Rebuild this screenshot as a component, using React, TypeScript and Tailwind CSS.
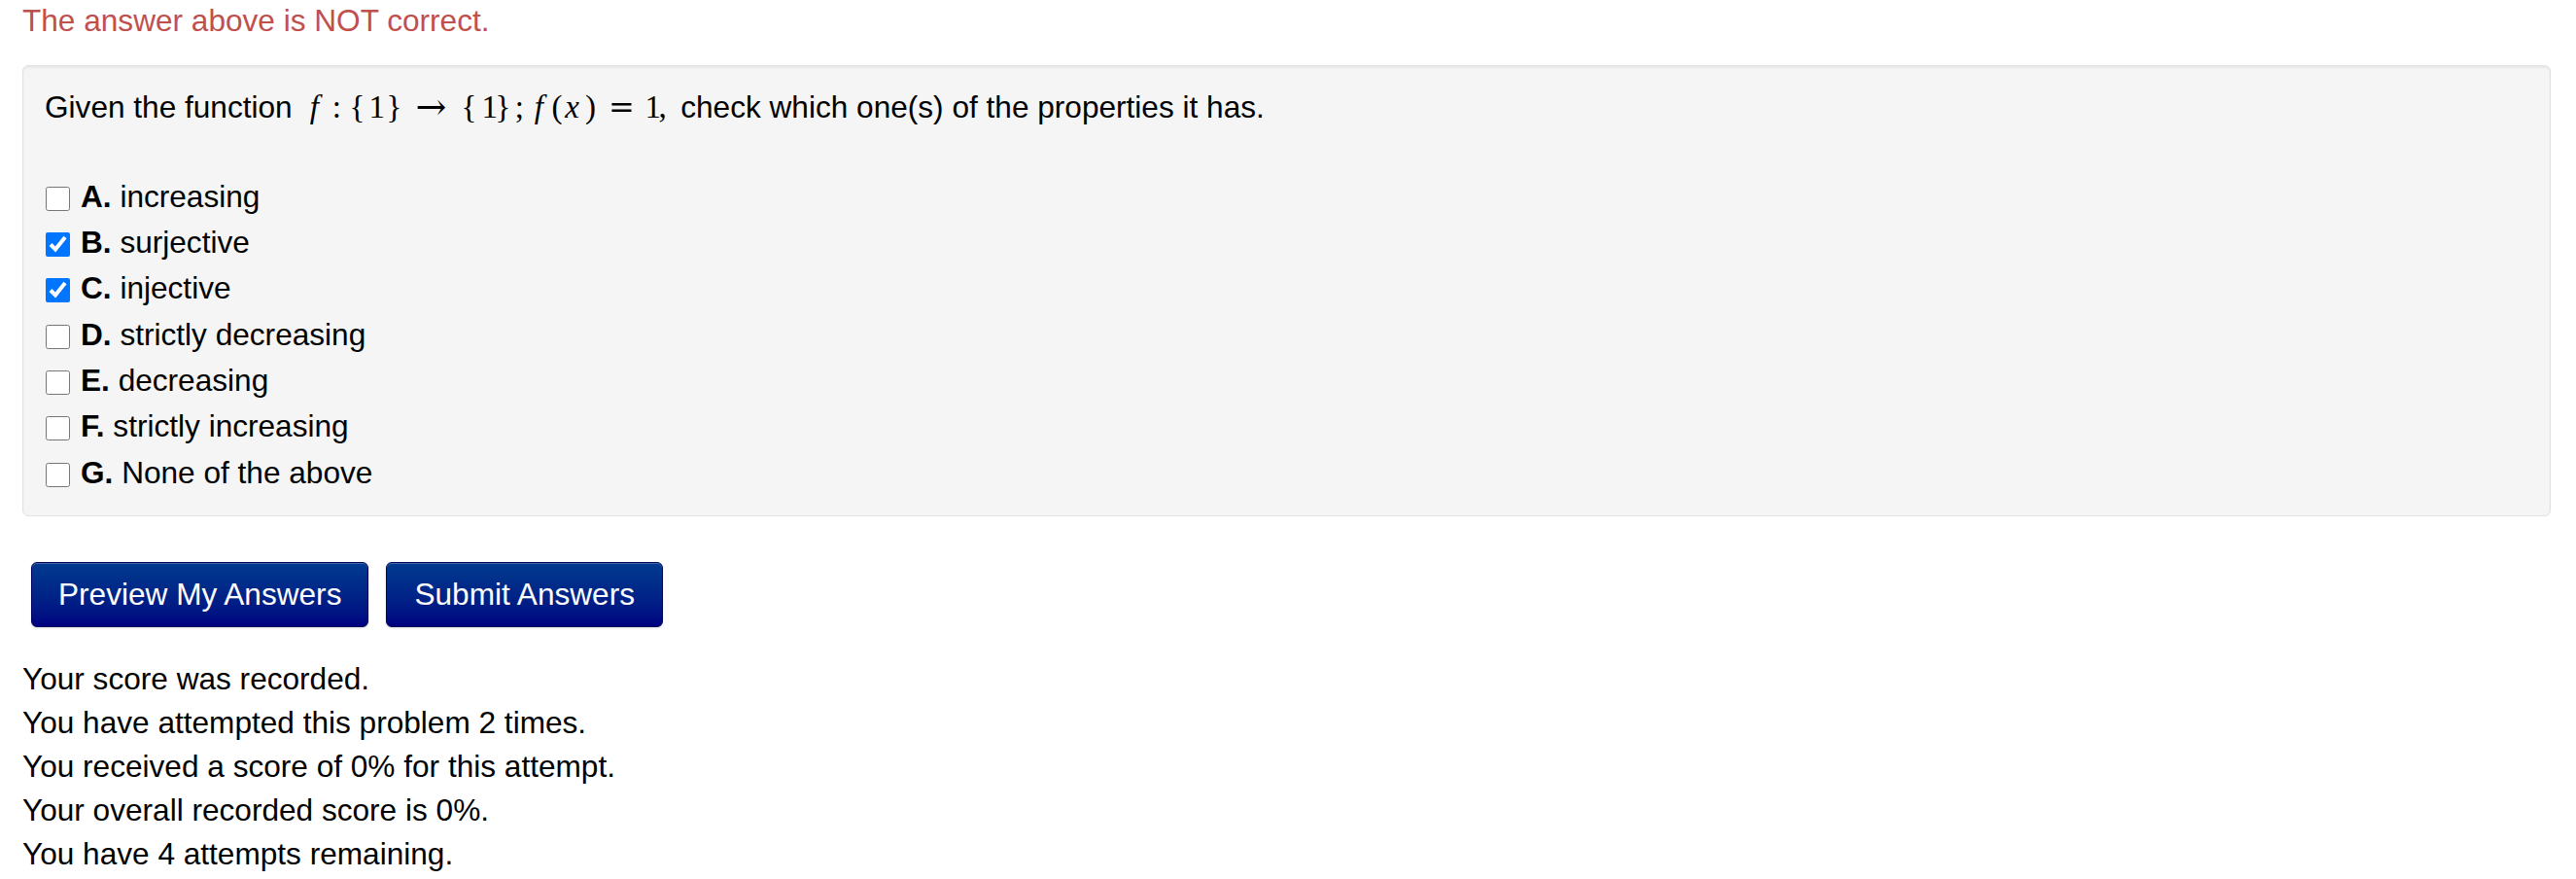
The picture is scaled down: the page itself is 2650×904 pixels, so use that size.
import React from "react";

const options = [
  { k: "A", t: "increasing", c: false },
  { k: "B", t: "surjective", c: true },
  { k: "C", t: "injective", c: true },
  { k: "D", t: "strictly decreasing", c: false },
  { k: "E", t: "decreasing", c: false },
  { k: "F", t: "strictly increasing", c: false },
  { k: "G", t: "None of the above", c: false },
];

const scoreLines = [
  "Your score was recorded.",
  "You have attempted this problem 2 times.",
  "You received a score of 0% for this attempt.",
  "Your overall recorded score is 0%.",
  "You have 4 attempts remaining.",
];

function MathExpr() {
  const serif = "font-['Liberation_Serif','DejaVu_Serif',serif]";
  const dv = "font-['DejaVu_Serif','Liberation_Serif',serif]";
  return (
    <span className={`inline-flex w-[382px] align-baseline leading-[45px] text-[33px] ${serif}`}>
      <span className="w-[28px] text-center italic">f</span>
      <span className="w-[18px] text-center">:</span>
      <span className="w-[24px] text-center">{"{"}</span>
      <span className="w-[14px] text-center">1</span>
      <span className="w-[24px] text-center">{"}"}</span>
      <span className={`w-[52px] text-center text-[38px] ${dv}`}>→</span>
      <span className="w-[26px] text-center">{"{"}</span>
      <span className="w-[12px] text-center">1</span>
      <span className="w-[20px] text-center">{"}"}</span>
      <span className="w-[14px] text-center">;</span>
      <span className="w-[26px] text-center italic">f</span>
      <span className="w-[10px] text-center">(</span>
      <span className="w-[22px] text-center italic">x</span>
      <span className="w-[16px] text-center">)</span>
      <span className={`w-[48px] text-center text-[32px] ${dv}`}>=</span>
      <span className="w-[14px] text-center">1</span>
      <span className="w-[8px] text-center">,</span>
    </span>
  );
}

export default function App() {
  return (
    <div className="w-[2650px] h-[904px] overflow-hidden bg-white pl-[23px] text-[31.6px] text-black font-['Liberation_Sans',Arial,sans-serif]">
      <div className="h-[43px] leading-[43px] text-[#c0504d]">The answer above is NOT correct.</div>

      <div className="mt-[24px] w-[2601px] rounded-[6px] border border-[#e1e1e1] bg-[#f5f5f5] pl-[22px] pt-[20px] pb-[20px] shadow-[inset_0_2px_2px_rgba(0,0,0,0.05)]">
        <div className="h-[45px] leading-[45px] whitespace-nowrap">
          Given the function <MathExpr /> check which one(s) of the properties it has.
        </div>
        <div className="mt-[45.6px] flex flex-col">
          {options.map((o) => (
            <label key={o.k} className="flex h-[47.33px] items-start">
              <input
                type="checkbox"
                defaultChecked={o.c}
                className="m-0 ml-[1px] mr-[11px] mt-[13px] h-[25px] w-[25px] shrink-0 accent-[#0075ff]"
              />
              <span className="leading-[47px] whitespace-nowrap">
                <b className="font-bold">{o.k}.</b> {o.t}
              </span>
            </label>
          ))}
        </div>
      </div>

      <div className="mt-[47px] ml-[9px] flex gap-[18px]">
        <button className="h-[67px] rounded-[6px] border border-[#00005a] bg-linear-to-b from-[#003a8e] to-[#000080] px-[27px] text-white shadow-[inset_0_1px_0_rgba(255,255,255,0.25),0_1px_2px_rgba(0,0,0,0.15)] leading-[65px]">
          Preview My Answers
        </button>
        <button className="h-[67px] rounded-[6px] border border-[#00005a] bg-linear-to-b from-[#003a8e] to-[#000080] px-[28px] text-white shadow-[inset_0_1px_0_rgba(255,255,255,0.25),0_1px_2px_rgba(0,0,0,0.15)] leading-[65px]">
          Submit Answers
        </button>
      </div>

      <div className="mt-[31px]">
        {scoreLines.map((l) => (
          <div key={l} className="h-[45px] leading-[45px] whitespace-nowrap">
            {l}
          </div>
        ))}
      </div>
    </div>
  );
}
